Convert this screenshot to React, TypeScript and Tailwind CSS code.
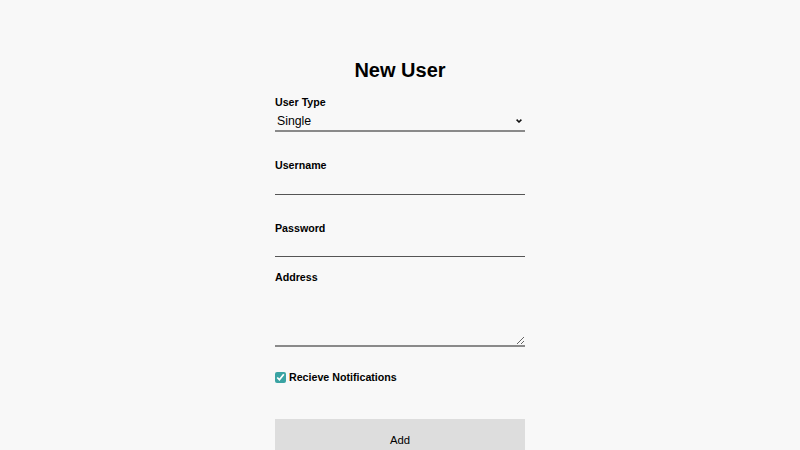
import React from "react";

export default function App() {
  return (
    <div className="min-h-[450px] w-full bg-[#f8f8f8] overflow-hidden" style={{ fontFamily: '"Liberation Sans", Arial, sans-serif' }}>
      <form className="w-[250px] mx-auto pt-[58px] flex flex-col text-black" onSubmit={(e) => e.preventDefault()}>
        <h1 className="text-[20px] leading-[24px] font-bold text-center">New User</h1>

        <label className="mt-[14px] text-[10.67px] leading-[13px] font-bold block">User Type</label>
        <div className="relative h-[23px]">
          <select
            defaultValue="Single"
            className="block appearance-none h-[23px] w-full bg-transparent border-0 border-b-2 border-[#8a8a8a] text-[12.3px] text-black outline-none pl-[2px] pr-4 pt-[3px]"
          >
            <option>Single</option>
            <option>Family</option>
          </select>
          <svg
            className="pointer-events-none absolute right-[3px] top-[10px]"
            width="6"
            height="4"
            viewBox="0 0 6 4"
          >
            <path d="M0.6 0.6 L3 3 L5.4 0.6" fill="none" stroke="#111" strokeWidth="1.5" />
          </svg>
        </div>

        <label className="mt-[27px] text-[10.67px] leading-[13px] font-bold block">Username</label>
        <input type="text" className="h-[23px] w-full bg-transparent border-0 border-b border-[#555] text-[11.5px] outline-none" />

        <label className="mt-[27px] text-[10.67px] leading-[13px] font-bold block">Password</label>
        <input type="password" className="h-[22px] w-full bg-transparent border-0 border-b border-[#555] text-[11.5px] outline-none" />

        <label className="mt-[14px] text-[10.67px] leading-[13px] font-bold block">Address</label>
        <textarea className="h-[63px] w-full bg-transparent border-0 border-b-2 border-[#8a8a8a] text-[11.5px] outline-none block" />

        <div className="mt-[24px] h-[13px] flex items-center gap-[3px]">
          <input type="checkbox" defaultChecked className="w-[11px] h-[11px] m-0 accent-[#3aa3a3]" />
          <span className="text-[10.67px] leading-[13px] font-bold">Recieve Notifications</span>
        </div>

        <button type="submit" className="mt-[35px] h-[43px] w-full bg-[#dddddd] text-[11.3px] text-black">
          Add
        </button>
      </form>
    </div>
  );
}
